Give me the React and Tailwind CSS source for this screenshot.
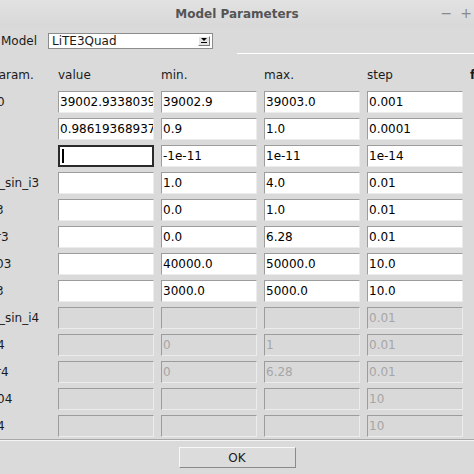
import React from "react";

const rows = [
  { label: "0", shift: "-ml-[3px]", vals: ["39002.93380399", "39002.9", "39003.0", "0.001"] },
  { label: "", shift: "", vals: ["0.986193689372", "0.9", "1.0", "0.0001"] },
  { label: "", shift: "", vals: ["", "-1e-11", "1e-11", "1e-14"], focus: true },
  { label: "_sin_i3", shift: "-ml-[1px]", vals: ["", "1.0", "4.0", "0.01"] },
  { label: "3", shift: "-ml-[4px]", vals: ["", "0.0", "1.0", "0.01"] },
  { label: "r3", shift: "-ml-[4px]", vals: ["", "0.0", "6.28", "0.01"] },
  { label: "03", shift: "-ml-[4px]", vals: ["", "40000.0", "50000.0", "10.0"] },
  { label: "3", shift: "-ml-[4px]", vals: ["", "3000.0", "5000.0", "10.0"] },
  { label: "_sin_i4", shift: "-ml-[1px]", vals: ["", "", "", "0.01"], off: true },
  { label: "4", shift: "-ml-[3px]", vals: ["", "0", "1", "0.01"], off: true },
  { label: "r4", shift: "-ml-[4px]", vals: ["", "0", "6.28", "0.01"], off: true },
  { label: "04", shift: "-ml-[3px]", vals: ["", "", "", "10"], off: true },
  { label: "4", shift: "-ml-[3px]", vals: ["", "", "", "10"], off: true },
];

const Field = ({ text, off, focus }) => {
  if (focus) {
    return (
      <div className="h-[22px] border-2 border-[#2a2a2a] bg-white flex items-center pl-[2px]">
        <div className="w-[2px] h-[14px] bg-black"></div>
      </div>
    );
  }
  return (
    <div
      className={`h-[22px] border border-t-[#9c9c9c] border-l-[#9c9c9c] border-b-[#ececec] border-r-[#ececec] flex items-center pl-[1px] overflow-hidden whitespace-nowrap ${
        off ? "bg-[#d9d9d9] text-[#a6a6a6]" : "bg-white text-black"
      }`}
    >
      {text}
    </div>
  );
};

export default function App() {
  return (
    <div
      className="w-[474px] h-[474px] overflow-hidden bg-[#dadada] text-[12px] text-[#1a1a1a]"
      style={{ fontFamily: '"DejaVu Sans", sans-serif' }}
    >
      {/* title bar */}
      <div className="h-[27px] grid grid-cols-[1fr_auto_1fr] items-center bg-gradient-to-b from-[#e2e2e2] to-[#d8d8d8]">
        <div></div>
        <div className="font-bold text-[#555555]">Model Parameters</div>
        <div className="flex justify-end items-center gap-[8px] pr-[2px] text-[#8a8a8a] text-[14px]">
          <span>−</span>
          <span>+</span>
        </div>
      </div>

      {/* model selector */}
      <div className="h-[27px] flex items-center">
        <span className="ml-[1px] w-[47px]">Model</span>
        <div className="w-[165px] h-[16px] bg-white border border-[#8c8c8c] flex items-center justify-between pl-[3px] pr-[2px]">
          <span className="leading-none">LiTE3Quad</span>
          <div className="w-[12px] h-[10px] bg-[#e4e4e4] border border-t-white border-l-white border-b-[#7a7a7a] border-r-[#7a7a7a] flex flex-col items-center justify-center gap-[1px]">
            <div className="w-0 h-0 border-l-[3px] border-r-[3px] border-t-[3px] border-l-transparent border-r-transparent border-t-black"></div>
            <div className="w-[6px] h-[1px] bg-black"></div>
          </div>
        </div>
        <div className="flex-1 self-end ml-[24px] border-b border-white"></div>
      </div>

      {/* parameter table */}
      <div className="mt-[10px] -ml-[8px] grid grid-cols-[59px_96px_96px_96px_96px_auto] gap-x-[7px] gap-y-[5px] items-center">
        <div className="h-[22px] flex items-center">Param.</div>
        <div>value</div>
        <div>min.</div>
        <div>max.</div>
        <div>step</div>
        <div className="font-bold whitespace-nowrap">fix</div>

        {rows.map((r, i) => (
          <React.Fragment key={i}>
            <div className="h-[22px] flex items-center pl-[8px] overflow-hidden whitespace-nowrap">
              <span className={r.shift}>{r.label}</span>
            </div>
            {r.vals.map((v, j) => (
              <Field key={j} text={v} off={r.off} focus={r.focus && j === 0} />
            ))}
            <div></div>
          </React.Fragment>
        ))}
      </div>

      {/* footer */}
      <div className="mt-[2px] border-t border-t-[#a8a8a8] border-b border-b-[#f4f4f4]"></div>
      <div className="flex justify-center pt-[6px]">
        <button className="w-[117px] h-[21px] bg-[#dcdcdc] border border-t-[#f8f8f8] border-l-[#f8f8f8] border-b-[#8a8a8a] border-r-[#8a8a8a] text-[#1a1a1a]">
          OK
        </button>
      </div>
    </div>
  );
}
